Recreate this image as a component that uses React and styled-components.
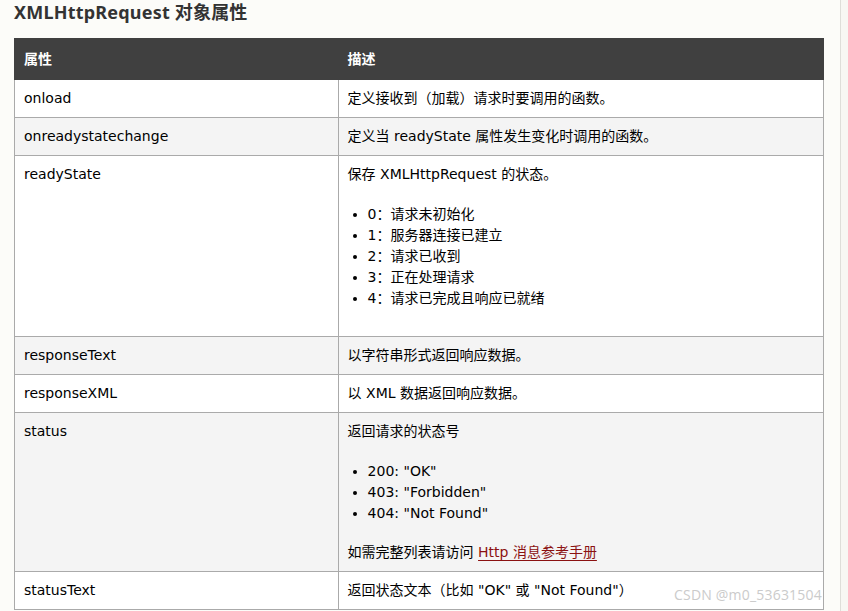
import styled, { createGlobalStyle } from "styled-components"

const GlobalStyle = createGlobalStyle`
    html, body {
        margin: 0;
        padding: 0;
        background: #f7f7f3;
    }
`

const Page = styled.div`
    position: relative;
    box-sizing: border-box;
    width: 841px;
    height: 611px;
    padding-left: 14px;
    background: #fcfcf9;
    border-right: 1px solid #deded9;
    overflow: hidden;
`

const Title = styled.h2`
    margin: 0 0 14px;
    font-family: "Noto Sans", "Noto Sans CJK SC", sans-serif;
    font-size: 18px;
    font-weight: 700;
    line-height: 24px;
    letter-spacing: 0.2px;
    color: #333;
`

const Table = styled.table`
    width: 810px;
    border-collapse: collapse;
    font-family: "DejaVu Sans", Verdana, "Noto Sans CJK SC", sans-serif;
    font-size: 14px;
    line-height: 21px;
    color: #000;
`

const Head = styled.th`
    background: #404040;
    color: #fff;
    text-align: left;
    font-weight: 700;
    padding: 10px 9px 9px;
    border: 1px solid #404040;
    width: ${(p) => p.$width || "auto"};
`

const Row = styled.tr`
    background: ${(p) => (p.$shaded ? "#f4f4f4" : "#fff")};
`

const Cell = styled.td`
    vertical-align: top;
    padding: 8px 9px;
    border: 1px solid #aaa;
`

const Para = styled.p`
    margin: 0;
`

const List = styled.ul`
    margin: ${(p) => (p.$tight ? "19px 0 18px" : "19px 0")};
    padding-left: 20px;
`

const Link = styled.a`
    color: #8b1111;
    text-decoration: underline;
    text-underline-offset: 3px;
`

const Watermark = styled.span`
    position: absolute;
    left: 674px;
    top: 585px;
    font-family: "Open Sans", sans-serif;
    font-size: 14px;
    color: #cbcbcb;
    letter-spacing: 0.2px;
`

const readyStates = [
    "0：请求未初始化",
    "1：服务器连接已建立",
    "2：请求已收到",
    "3：正在处理请求",
    "4：请求已完成且响应已就绪",
]

const statusCodes = ['200: "OK"', '403: "Forbidden"', '404: "Not Found"']

const App = () => {
    return (
        <>
            <GlobalStyle />
            <Page>
                <Title>XMLHttpRequest 对象属性</Title>
                <Table>
                    <thead>
                        <tr>
                            <Head $width="40%">属性</Head>
                            <Head>描述</Head>
                        </tr>
                    </thead>
                    <tbody>
                        <Row>
                            <Cell>onload</Cell>
                            <Cell>定义接收到（加载）请求时要调用的函数。</Cell>
                        </Row>
                        <Row $shaded>
                            <Cell>onreadystatechange</Cell>
                            <Cell>定义当 readyState 属性发生变化时调用的函数。</Cell>
                        </Row>
                        <Row>
                            <Cell>readyState</Cell>
                            <Cell>
                                <Para>保存 XMLHttpRequest 的状态。</Para>
                                <List>
                                    {readyStates.map((s) => (
                                        <li key={s}>{s}</li>
                                    ))}
                                </List>
                            </Cell>
                        </Row>
                        <Row $shaded>
                            <Cell>responseText</Cell>
                            <Cell>以字符串形式返回响应数据。</Cell>
                        </Row>
                        <Row>
                            <Cell>responseXML</Cell>
                            <Cell>以 XML 数据返回响应数据。</Cell>
                        </Row>
                        <Row $shaded>
                            <Cell>status</Cell>
                            <Cell>
                                <Para>返回请求的状态号</Para>
                                <List $tight>
                                    {statusCodes.map((s) => (
                                        <li key={s}>{s}</li>
                                    ))}
                                </List>
                                <Para>
                                    如需完整列表请访问 <Link href="#">Http 消息参考手册</Link>
                                </Para>
                            </Cell>
                        </Row>
                        <Row>
                            <Cell>statusText</Cell>
                            <Cell>返回状态文本（比如 "OK" 或 "Not Found"）</Cell>
                        </Row>
                    </tbody>
                </Table>
                <Watermark>CSDN @m0_53631504</Watermark>
            </Page>
        </>
    )
}

export default App
